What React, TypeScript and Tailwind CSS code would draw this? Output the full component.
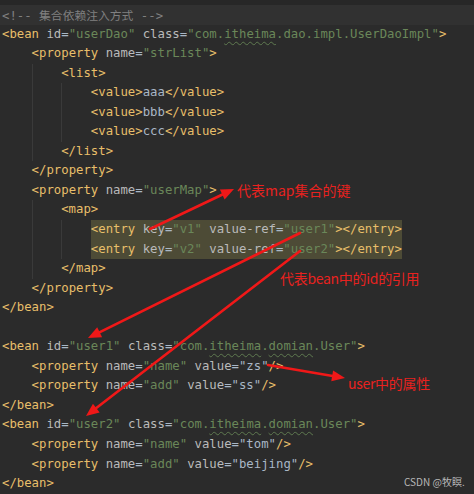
import React from "react";

type Tok = [string, string] | [string, string, "u"];

const TAG = "#e8bf6a";
const ATT = "#bababa";
const VAL = "#6a8759";
const TXT = "#a9b7c6";
const EQ = "#a9b7c6";

const t = (s: string): Tok => [s, TAG];
const a = (s: string): Tok => [s, ATT];
const v = (s: string): Tok => [s, VAL];
const x = (s: string): Tok => [s, TXT];
const eq: Tok = ["=", EQ];
const sp: Tok = [" ", TXT];

function classVal(parts: (string | { u: string })[]): Tok[] {
  return parts.map((p) => (typeof p === "string" ? v(p) : ([p.u, VAL, "u"] as Tok)));
}

type Line = { indent: number; toks: Tok[]; hl?: boolean; comment?: boolean; cur?: boolean };

const lines: Line[] = [
  { indent: 0, toks: [], comment: true, cur: true },
  {
    indent: 0,
    toks: [
      t("<bean"), sp, a("id"), eq, v('"userDao"'), sp, a("class"), eq,
      ...classVal(['"com.', { u: "itheima" }, '.dao.impl.UserDaoImpl"']),
      t(">"),
    ],
  },
  { indent: 1, toks: [t("<property"), sp, a("name"), eq, v('"strList"'), t(">")] },
  { indent: 2, toks: [t("<list>")] },
  { indent: 3, toks: [t("<value>"), x("aaa"), t("</value>")] },
  { indent: 3, toks: [t("<value>"), x("bbb"), t("</value>")] },
  { indent: 3, toks: [t("<value>"), x("ccc"), t("</value>")] },
  { indent: 2, toks: [t("</list>")] },
  { indent: 1, toks: [t("</property>")] },
  { indent: 1, toks: [t("<property"), sp, a("name"), eq, v('"userMap"'), t(">")] },
  { indent: 2, toks: [t("<map>")] },
  {
    indent: 3,
    hl: true,
    toks: [t("<entry"), sp, a("key"), eq, v('"v1"'), sp, a("value-ref"), eq, v('"user1"'), t("></entry>")],
  },
  {
    indent: 3,
    hl: true,
    toks: [t("<entry"), sp, a("key"), eq, v('"v2"'), sp, a("value-ref"), eq, v('"user2"'), t("></entry>")],
  },
  { indent: 2, toks: [t("</map>")] },
  { indent: 1, toks: [t("</property>")] },
  { indent: 0, toks: [t("</bean>")] },
  { indent: 0, toks: [] },
  {
    indent: 0,
    toks: [
      t("<bean"), sp, a("id"), eq, v('"user1"'), sp, a("class"), eq,
      ...classVal(['"com.', { u: "itheima" }, ".", { u: "domian" }, '.User"']),
      t(">"),
    ],
  },
  { indent: 1, toks: [t("<property"), sp, a("name"), eq, v('"name"'), sp, a("value"), eq, x('"zs"'), t("/>")] },
  { indent: 1, toks: [t("<property"), sp, a("name"), eq, v('"add"'), sp, a("value"), eq, x('"ss"'), t("/>")] },
  { indent: 0, toks: [t("</bean>")] },
  {
    indent: 0,
    toks: [
      t("<bean"), sp, a("id"), eq, v('"user2"'), sp, a("class"), eq,
      ...classVal(['"com.', { u: "itheima" }, ".", { u: "domian" }, '.User"']),
      t(">"),
    ],
  },
  { indent: 1, toks: [t("<property"), sp, a("name"), eq, v('"name"'), sp, a("value"), eq, x('"tom"'), t("/>")] },
  { indent: 1, toks: [t("<property"), sp, a("name"), eq, v('"add"'), sp, a("value"), eq, x('"beijing"'), t("/>")] },
  { indent: 0, toks: [t("</bean>")] },
];

function Arrow({ x1, y1, x2, y2 }: { x1: number; y1: number; x2: number; y2: number }) {
  const dx = x2 - x1;
  const dy = y2 - y1;
  const len = Math.sqrt(dx * dx + dy * dy);
  const ux = dx / len;
  const uy = dy / len;
  const hl = 13;
  const hw = 5.5;
  const bx = x2 - ux * hl;
  const by = y2 - uy * hl;
  const px = -uy;
  const py = ux;
  const pts = `${x2},${y2} ${bx + px * hw},${by + py * hw} ${bx - px * hw},${by - py * hw}`;
  return (
    <g>
      <line x1={x1} y1={y1} x2={bx + ux * 2} y2={by + uy * 2} stroke="#f01818" strokeWidth={2.6} strokeLinecap="round" />
      <polygon points={pts} fill="#f01818" />
    </g>
  );
}

const cjk = { fontFamily: '"Noto Sans CJK SC", sans-serif' };

export default function App() {
  return (
    <div
      className="relative w-[474px] h-[494px] overflow-hidden bg-[#2b2b2b]"
      style={{ fontFamily: '"DejaVu Sans Mono", "Noto Sans CJK SC", monospace' }}
    >
      <div className="h-[5px] bg-[#272727]" />
      <div className="flex flex-col text-[12.3px]">
        {lines.map((ln, i) => (
          <div
            key={i}
            className={`h-[19.55px] leading-[19.55px] whitespace-pre pl-[2px] flex ${ln.cur ? "bg-[#313131]" : ""}`}
          >
            {Array.from({ length: ln.indent }).map((_, k) => (
              <span
                key={k}
                className={`inline-block w-[4ch] h-full ${k > 0 ? "border-l border-[#3a3a3a]" : ""}`}
              />
            ))}
            {ln.comment ? (
              <span className="text-[#808080]">
                {"<!-- "}
                <span className="text-[11.8px]" style={cjk}>
                  集合依赖注入方式
                </span>
                {" -->"}
              </span>
            ) : (
              <span className={ln.hl ? "bg-[#4d4b36]" : ""}>
                {ln.toks.map((tk, j) => (
                  <span
                    key={j}
                    style={{ color: tk[1] }}
                    className={
                      tk[2] === "u"
                        ? "underline decoration-wavy decoration-[#5f7a50] decoration-1 underline-offset-[3px]"
                        : ""
                    }
                  >
                    {tk[0]}
                  </span>
                ))}
              </span>
            )}
          </div>
        ))}
      </div>

      <svg className="absolute inset-0 pointer-events-none" width={474} height={494} viewBox="0 0 474 494">
        <Arrow x1={150} y1={229} x2={234} y2={189} />
        <Arrow x1={300} y1={233} x2={88} y2={338} />
        <Arrow x1={300} y1={251} x2={86} y2={416} />
        <Arrow x1={268} y1={365} x2={345} y2={378} />
      </svg>

      <div
        className="absolute left-[237px] top-[180px] text-[14px] leading-[20px] text-[#e8221f] whitespace-nowrap"
        style={cjk}
      >
        代表map集合的键
      </div>
      <div
        className="absolute left-[280px] top-[268px] text-[14px] leading-[20px] text-[#e8221f] whitespace-nowrap tracking-[-0.3px]"
        style={cjk}
      >
        代表bean中的id的引用
      </div>
      <div
        className="absolute left-[348px] top-[373px] text-[14px] leading-[20px] text-[#e8221f] whitespace-nowrap tracking-[-0.3px]"
        style={cjk}
      >
        user中的属性
      </div>
      <div
        className="absolute left-[404px] top-[475px] text-[10px] leading-[14px] text-[#b8b8b8] whitespace-nowrap"
        style={cjk}
      >
        CSDN @牧瞑.
      </div>
    </div>
  );
}
